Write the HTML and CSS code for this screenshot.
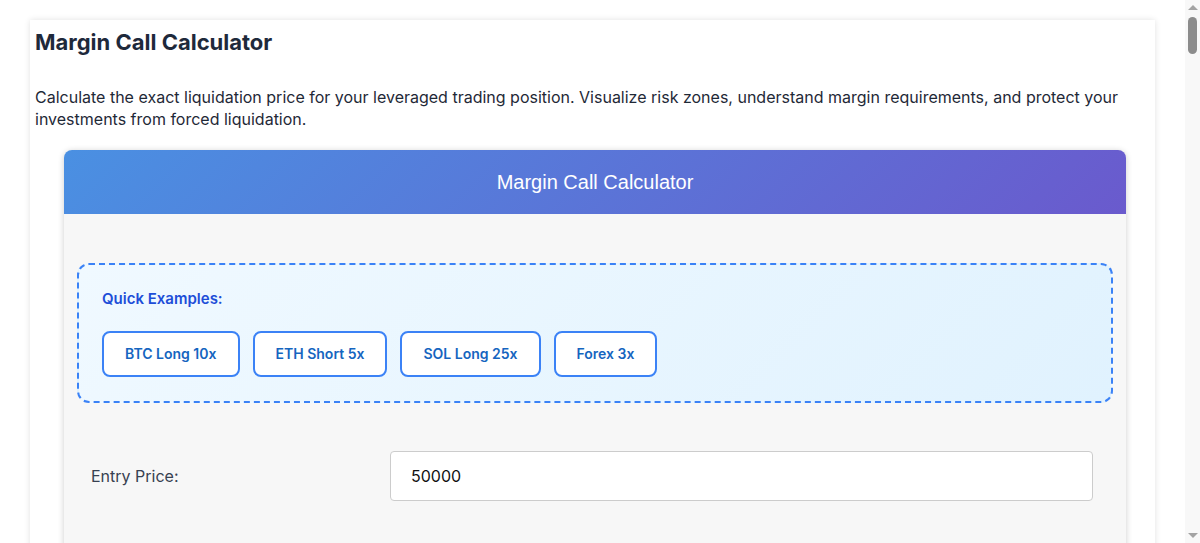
FILE: index.html
```html
<!DOCTYPE html>
<html lang="en">
<head>
<meta charset="utf-8">
<title>Margin Call Calculator</title>
<link rel="stylesheet" href="styles.css">
</head>
<body>
<div class="page">
  <h1 class="page-title">Margin Call Calculator</h1>
  <p class="intro">Calculate the exact liquidation price for your leveraged trading position. Visualize risk zones, understand margin requirements, and protect your investments from forced liquidation.</p>
  <div class="widget">
    <div class="widget-header">Margin Call Calculator</div>
    <div class="widget-body">
      <div class="examples">
        <div class="examples-label">Quick Examples:</div>
        <div class="examples-buttons">
          <button class="ex-btn">BTC Long 10x</button>
          <button class="ex-btn">ETH Short 5x</button>
          <button class="ex-btn">SOL Long 25x</button>
          <button class="ex-btn">Forex 3x</button>
        </div>
      </div>
      <div class="form-row">
        <label class="form-label">Entry Price:</label>
        <input class="form-input" type="text" value="50000">
      </div>
    </div>
  </div>
</div>
<div class="scrollbar">
  <span class="sb-arrow sb-up"></span>
  <span class="sb-thumb"></span>
  <span class="sb-arrow sb-down"></span>
</div>
</body>
</html>
```
FILE: styles.css
```css
html, body {
  margin: 0;
  padding: 0;
  background: #ffffff;
  overflow: hidden;
}
body {
  font-family: Inter, "Noto Sans", sans-serif;
  color: #1f2937;
}
.page {
  width: 1125px;
  margin: 20px 0 40px 30px;
  padding: 8px 5px 40px;
  box-sizing: border-box;
  background: #ffffff;
  box-shadow: 0 0 6px rgba(0, 0, 0, 0.12);
}
.page-title {
  margin: 0;
  font-size: 22px;
  line-height: 28px;
  font-weight: 700;
  color: #1e293b;
}
.intro {
  margin: 30px 0 20px;
  font-size: 16px;
  line-height: 22px;
  color: #1f2937;
}
.widget {
  margin: 0 24px 0 29px;
  border-radius: 8px;
  overflow: hidden;
  background: #f7f7f7;
  box-shadow: 0 1px 6px rgba(0, 0, 0, 0.2);
}
.widget-header {
  height: 64px;
  display: flex;
  align-items: center;
  justify-content: center;
  background: linear-gradient(135deg, #4a90e2 0%, #6a5acd 100%);
  color: #ffffff;
  font-family: "Liberation Sans", Arial, sans-serif;
  font-size: 20px;
}
.widget-body {
  padding: 49px 13px 80px;
}
.examples {
  border: 2px dashed #3b82f6;
  border-radius: 12px;
  padding: 24px 24px 24px 23px;
  background: linear-gradient(135deg, #f0f9ff 0%, #e0f2fe 100%);
}
.examples-label {
  font-size: 15px;
  line-height: 20px;
  font-weight: 600;
  color: #1d4ed8;
  margin-bottom: 22px;
}
.examples-buttons {
  display: flex;
  gap: 13px;
}
.ex-btn {
  font-family: Inter, "Noto Sans", sans-serif;
  font-size: 14px;
  line-height: 18px;
  font-weight: 600;
  color: #1565c0;
  background: #ffffff;
  border: 2px solid #3b82f6;
  border-radius: 8px;
  padding: 12px 21px;
}
.form-row {
  display: flex;
  align-items: center;
  margin-top: 48px;
  padding: 0 20px 0 14px;
}
.form-label {
  width: 299px;
  flex: none;
  font-size: 16px;
  color: #374151;
}
.form-input {
  flex: 1;
  height: 50px;
  box-sizing: border-box;
  border: 1px solid #cccccc;
  border-radius: 4px;
  padding: 0 20px;
  font-family: Inter, "Noto Sans", sans-serif;
  font-size: 16px;
  color: #111111;
  background: #ffffff;
}
.scrollbar {
  position: fixed;
  top: 0;
  right: 0;
  width: 15px;
  height: 100%;
  background: #f8f8f8;
}
.sb-arrow {
  position: absolute;
  left: 3px;
  width: 0;
  height: 0;
  border-left: 5px solid transparent;
  border-right: 5px solid transparent;
}
.sb-up {
  top: 5px;
  border-bottom: 5px solid #a3a3a3;
}
.sb-down {
  bottom: 5px;
  border-top: 5px solid #a3a3a3;
}
.sb-thumb {
  position: absolute;
  top: 17px;
  left: 3px;
  width: 9px;
  height: 37px;
  border-radius: 5px;
  background: #8c8c8c;
}
```
